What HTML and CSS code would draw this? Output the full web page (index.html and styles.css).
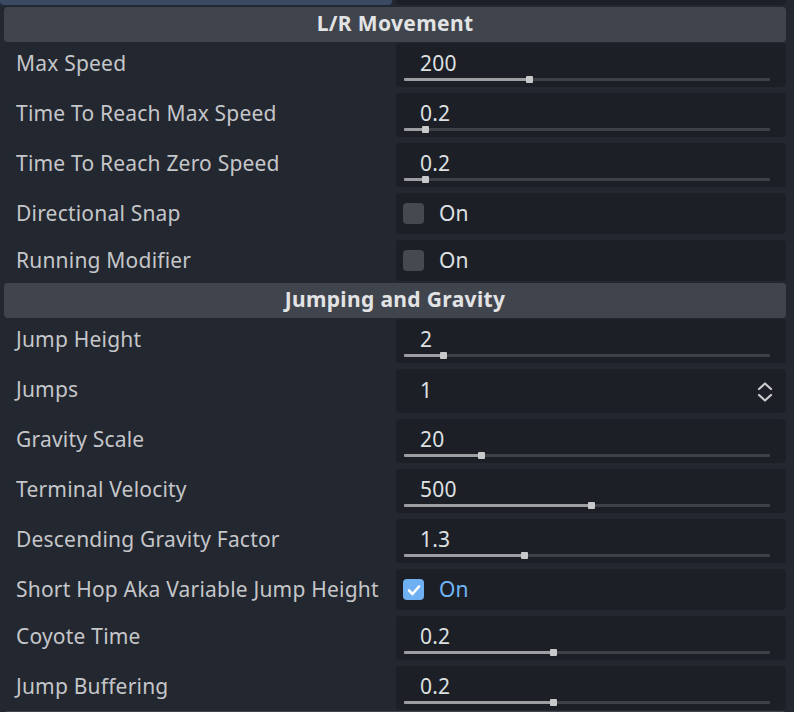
FILE: index.html
```html
<!DOCTYPE html>
<html>
<head>
<meta charset="utf-8">
<link rel="stylesheet" href="styles.css">
</head>
<body>
<div class="inspector">
  <div class="prev-row"><div class="prev-label"></div><div class="prev-field"></div></div>

  <div class="section">L/R Movement</div>

  <div class="row first">
    <div class="label">Max Speed</div>
    <div class="field slider"><span class="num">200</span><div class="track"><div class="fill" style="width:125px"></div><div class="grab" style="left:122px"></div></div></div>
  </div>
  <div class="row">
    <div class="label">Time To Reach Max Speed</div>
    <div class="field slider"><span class="num">0.2</span><div class="track"><div class="fill" style="width:21px"></div><div class="grab" style="left:18px"></div></div></div>
  </div>
  <div class="row">
    <div class="label">Time To Reach Zero Speed</div>
    <div class="field slider"><span class="num">0.2</span><div class="track"><div class="fill" style="width:21px"></div><div class="grab" style="left:18px"></div></div></div>
  </div>
  <div class="row check-row">
    <div class="label">Directional Snap</div>
    <div class="field check"><span class="box"></span><span class="on">On</span></div>
  </div>
  <div class="row check-row">
    <div class="label">Running Modifier</div>
    <div class="field check"><span class="box"></span><span class="on">On</span></div>
  </div>

  <div class="section second">Jumping and Gravity</div>

  <div class="row first">
    <div class="label">Jump Height</div>
    <div class="field slider"><span class="num">2</span><div class="track"><div class="fill" style="width:39px"></div><div class="grab" style="left:36px"></div></div></div>
  </div>
  <div class="row">
    <div class="label">Jumps</div>
    <div class="field spin"><span class="num">1</span>
      <svg class="updown" width="16" height="20" viewBox="0 0 16 20"><path d="M2 7 L8 1.5 L14 7 M2 13 L8 18.5 L14 13" fill="none" stroke="#c9cacc" stroke-width="2.2" stroke-linecap="round" stroke-linejoin="round"/></svg>
    </div>
  </div>
  <div class="row">
    <div class="label">Gravity Scale</div>
    <div class="field slider"><span class="num">20</span><div class="track"><div class="fill" style="width:77px"></div><div class="grab" style="left:74px"></div></div></div>
  </div>
  <div class="row">
    <div class="label">Terminal Velocity</div>
    <div class="field slider"><span class="num">500</span><div class="track"><div class="fill" style="width:187px"></div><div class="grab" style="left:184px"></div></div></div>
  </div>
  <div class="row">
    <div class="label">Descending Gravity Factor</div>
    <div class="field slider"><span class="num">1.3</span><div class="track"><div class="fill" style="width:120px"></div><div class="grab" style="left:117px"></div></div></div>
  </div>
  <div class="row check-row">
    <div class="label">Short Hop Aka Variable Jump Height</div>
    <div class="field check"><span class="box checked"><svg width="20" height="20" viewBox="0 0 20 20"><path d="M5 10.5 L8.5 14 L15 6.5" fill="none" stroke="#ffffff" stroke-width="2.6" stroke-linecap="round" stroke-linejoin="round"/></svg></span><span class="on active">On</span></div>
  </div>
  <div class="row">
    <div class="label">Coyote Time</div>
    <div class="field slider"><span class="num">0.2</span><div class="track"><div class="fill" style="width:149px"></div><div class="grab" style="left:146px"></div></div></div>
  </div>
  <div class="row">
    <div class="label">Jump Buffering</div>
    <div class="field slider"><span class="num">0.2</span><div class="track"><div class="fill" style="width:149px"></div><div class="grab" style="left:146px"></div></div></div>
  </div>

  <div class="section third"></div>
</div>
</body>
</html>
```

FILE: styles.css
```css
html, body {
  margin: 0;
  padding: 0;
  background: #232730;
  overflow: hidden;
}

body {
  font-family: "Noto Sans", "Open Sans", sans-serif;
  width: 794px;
  height: 712px;
}

.inspector {
  display: flex;
  flex-direction: column;
}

.prev-row {
  display: flex;
  height: 5px;
  padding-right: 8px;
}

.prev-label {
  width: 392px;
  background: #3a4a62;
  border-radius: 0 0 4px 4px;
}

.prev-field {
  flex: 1;
  margin-left: 4px;
  background: #1c1f26;
  border-radius: 0 0 4px 4px;
}

.section {
  margin: 2px 8px 0 4px;
  height: 35px;
  box-sizing: border-box;
  padding-bottom: 3px;
  background: #40444c;
  border-radius: 4px;
  color: #e2e3e5;
  font-weight: 700;
  font-size: 21px;
  letter-spacing: 0.35px;
  line-height: 1;
  display: flex;
  align-items: center;
  justify-content: center;
}

.section.second {
  margin-top: 2px;
}

.section.third {
  margin-top: 1px;
}

.row {
  display: flex;
  align-items: center;
  height: 44px;
  margin-top: 6px;
  padding-right: 8px;
}

.row.first {
  margin-top: 1px;
}

.row.check-row {
  height: 41px;
}

.label {
  width: 396px;
  box-sizing: border-box;
  padding-left: 16px;
  color: #c5c6c9;
  font-size: 21px;
  letter-spacing: 0.2px;
  white-space: nowrap;
  margin-top: -4px;
}

.check-row .label {
  margin-top: -2px;
}

.field {
  flex: 1;
  align-self: stretch;
  background: #1c1f26;
  border-radius: 4px;
  position: relative;
  display: flex;
  align-items: center;
}

.num {
  color: #dfe0e2;
  font-size: 21px;
  letter-spacing: 0.2px;
  padding-left: 24px;
}

.slider .num {
  margin-top: -4px;
}

.spin .num {
  margin-top: -2px;
}

.track {
  position: absolute;
  left: 8px;
  right: 16px;
  top: 35px;
  height: 3px;
  background: #3e4148;
  border-radius: 1px;
}

.fill {
  height: 100%;
  background: #9c9ea2;
  border-radius: 1px;
}

.grab {
  position: absolute;
  top: -2px;
  width: 7px;
  height: 7px;
  background: #c8c9cb;
  border-radius: 1px;
}

.spin {
  justify-content: space-between;
}

.updown {
  margin-right: 13px;
  margin-top: 1px;
}

.check {
  padding-left: 7px;
}

.box {
  width: 21px;
  height: 21px;
  border-radius: 4px;
  background: #46494f;
  display: flex;
  align-items: center;
  justify-content: center;
}

.box.checked {
  background: #6fb0f2;
}

.on {
  color: #dfe0e2;
  font-size: 21px;
  letter-spacing: 0.2px;
  margin-left: 15px;
  margin-top: -1px;
}

.on.active {
  color: #70b6f6;
}
```
